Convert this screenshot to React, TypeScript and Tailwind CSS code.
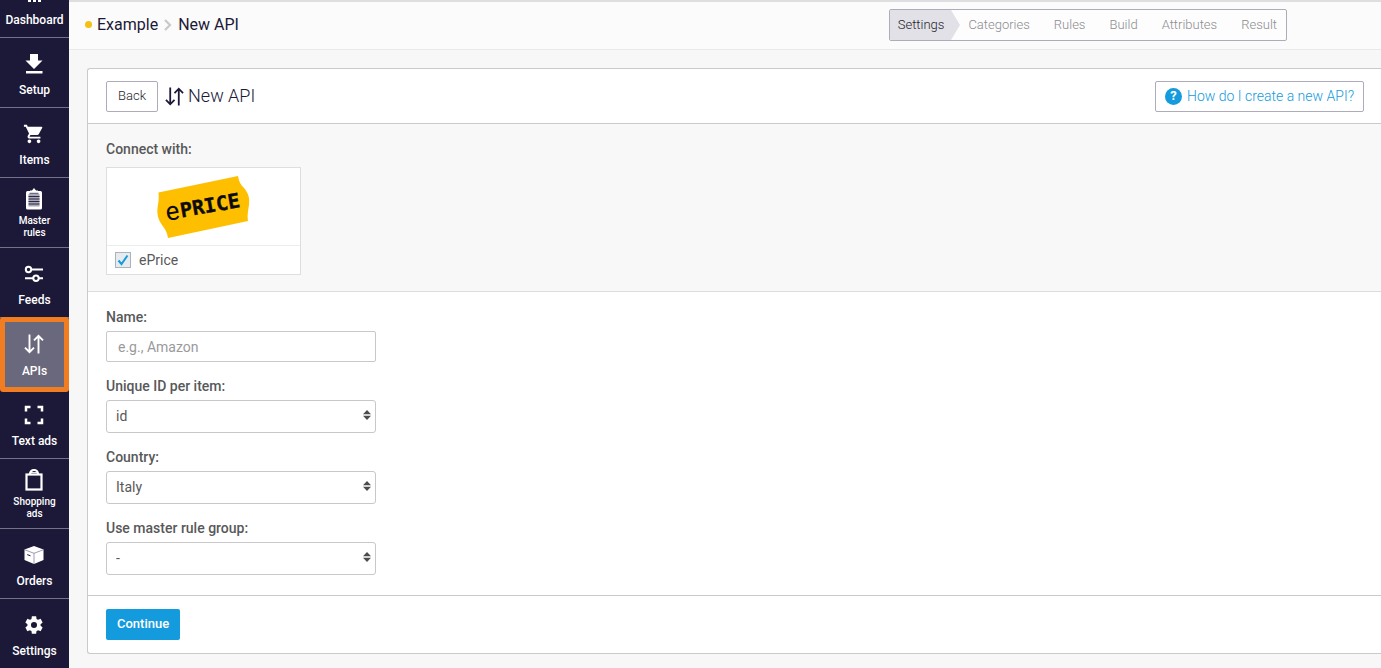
import { useState } from "react";
import type { ReactNode } from "react";

interface NavItem {
  label: string;
  icon: ReactNode;
  small?: boolean;
  active?: boolean;
}

function ArrowsIcon({ className }: { className: string }) {
  return (
    <svg viewBox="0 0 20 20" className={className} fill="none" stroke="currentColor" strokeWidth="1.9">
      <path d="M5.500 0.500v17.500M1 13.600l4.500 4.600 4.500-4.600M14.500 19.500V2M10 6.400l4.500-4.600 4.500 4.600" />
    </svg>
  );
}

const NAV_ITEMS: NavItem[] = [
  {
    label: "Setup",
    icon: (
      <svg viewBox="0 0 20 22" className="h-[22px] w-5" fill="currentColor">
        <path d="M6 1h8v6.500h4.500L10 16 1.500 7.500H6zM2 18h16.500v2.500H2z" />
      </svg>
    ),
  },
  {
    label: "Items",
    icon: (
      <svg viewBox="0 0 24 24" className="size-[22px]" fill="currentColor">
        <path d="M7 18c-1.1 0-1.99.9-1.99 2S5.900 22 7 22s2-.9 2-2-.9-2-2-2zM1 2v2h2l3.600 7.590-1.350 2.450c-.16.28-.25.61-.25.96 0 1.100.9 2 2 2h12v-2H7.420c-.14 0-.25-.11-.25-.25l.03-.12.9-1.630h7.450c.75 0 1.410-.41 1.750-1.030l3.580-6.490A1 1 0 0 0 20 4H5.210l-.94-2H1zm16 16c-1.100 0-1.990.9-1.990 2s.89 2 1.990 2 2-.9 2-2-.9-2-2-2z" />
      </svg>
    ),
  },
  {
    label: "Master rules",
    small: true,
    icon: (
      <svg viewBox="0 0 18 22" className="h-[22px] w-[18px]">
        <rect x="1" y="3" width="16" height="18.500" rx="1.500" fill="#fff" />
        <path d="M5 5V2.500h2L9 0l2 2.500h2V5z" fill="#fff" />
        <rect x="3.500" y="6" width="11" height="12.500" fill="#a9a8b6" />
        <path d="M3.500 8.500h11M3.500 11h11M3.500 13.500h11M3.500 16h11" stroke="#1c1938" strokeWidth="0.9" />
        <path d="M4.500 5.300h9" stroke="#1c1938" strokeWidth="0.8" />
      </svg>
    ),
  },
  {
    label: "Feeds",
    icon: (
      <svg viewBox="0 0 20 18" className="h-[18px] w-5" fill="none" stroke="currentColor" strokeWidth="2">
        <circle cx="4.500" cy="4.500" r="2.700" />
        <path d="M7.500 4.500H19M1 13.300h8M15 13.300h4" />
        <circle cx="12" cy="13.300" r="2.700" />
      </svg>
    ),
  },
  { label: "APIs", active: true, icon: <ArrowsIcon className="size-5" /> },
  {
    label: "Text ads",
    icon: (
      <svg viewBox="0 0 20 20" className="size-5" fill="none" stroke="currentColor" strokeWidth="2.500">
        <path d="M2 6.500V2h4.500M13.500 2H18v4.500M18 13.500V18h-4.500M6.500 18H2v-4.500" />
      </svg>
    ),
  },
  {
    label: "Shopping ads",
    small: true,
    icon: (
      <svg viewBox="0 0 18 22" className="h-[22px] w-[18px]" fill="none" stroke="currentColor">
        <rect x="1.500" y="5.500" width="15" height="15" strokeWidth="2.200" />
        <path d="M5 5.500C5 -0.500 13 -0.500 13 5.500" strokeWidth="2.200" />
        <path d="M5.500 3.600h7" strokeWidth="1" />
      </svg>
    ),
  },
  {
    label: "Orders",
    icon: (
      <svg viewBox="0 0 20 20" className="size-5">
        <path d="M10 1l9.500 3.500v10.500L10 19 .5 15V4.500z" fill="#fff" />
        <path d="M.5 4.700L10 8.300l9.500-3.600M10 8.300V19" fill="none" stroke="#8583a0" strokeWidth="0.8" />
        <path d="M3.200 9.600l3.300 1.200" stroke="#1c1938" strokeWidth="1" />
      </svg>
    ),
  },
  {
    label: "Settings",
    icon: (
      <svg viewBox="0 0 24 24" className="size-[22px]" fill="currentColor">
        <path d="M19.140 12.940c.04-.3.06-.61.06-.94 0-.32-.02-.64-.07-.94l2.030-1.580c.18-.14.23-.41.12-.61l-1.920-3.320c-.12-.22-.37-.29-.59-.22l-2.390.96c-.5-.38-1.030-.7-1.620-.94L14.400 2.810c-.04-.24-.24-.41-.48-.41h-3.840c-.24 0-.43.17-.47.41L9.250 5.350c-.59.24-1.130.57-1.620.94L5.240 5.330c-.22-.08-.47 0-.59.22L2.740 8.870c-.12.21-.08.47.12.61l2.030 1.580c-.05.3-.09.63-.09.94s.02.64.07.94l-2.030 1.580c-.18.14-.23.41-.12.61l1.920 3.320c.12.22.37.29.59.22l2.390-.96c.5.38 1.030.7 1.620.94l.36 2.540c.05.24.24.41.48.41h3.840c.24 0 .44-.17.47-.41l.36-2.540c.59-.24 1.130-.56 1.620-.94l2.390.96c.22.08.47 0 .59-.22l1.920-3.320c.12-.22.07-.47-.12-.61l-2.010-1.580zM12 15.300A3.300 3.300 0 1 1 12 8.700a3.300 3.300 0 0 1 0 6.600z" />
      </svg>
    ),
  },
];

const STEPS = ["Categories", "Rules", "Build", "Attributes", "Result"];

function Sidebar() {
  return (
    <nav className="h-screen w-[69px] shrink-0 overflow-hidden bg-[#1c1938] text-center text-xs font-medium text-white">
      <a href="#dashboard" className="flex h-[38px] flex-col items-center justify-end gap-2 overflow-hidden border-b border-[#74728a] pb-[9px]">
        <svg viewBox="0 0 16 16" className="size-4 shrink-0" fill="currentColor">
          <path d="M1 8h3v6H1zM6 3h3v11H6zM11 6h3v8h-3z" />
        </svg>
        <span className="leading-4">Dashboard</span>
      </a>
      {NAV_ITEMS.map((item) =>
        item.active ? (
          <a
            key={item.label}
            href="#apis"
            aria-current="page"
            className="relative z-10 -mt-px -mb-[3px] flex h-[75px] flex-col items-center rounded-[3px] border-[5px] border-[#f07d22] bg-[#6a687c] pt-[11px]"
          >
            <span className="flex h-[22px] items-center pr-px">{item.icon}</span>
            <span className="mt-2 leading-4">{item.label}</span>
          </a>
        ) : (
          <a
            key={item.label}
            href={`#${item.label.toLowerCase().replace(" ", "-")}`}
            className={
              item.small
                ? "flex h-[70px] flex-col items-center border-b border-[#74728a] pt-[10px]"
                : "flex h-[70px] flex-col items-center border-b border-[#74728a] pt-[15px]"
            }
          >
            <span className="flex h-[22px] items-center pr-px">{item.icon}</span>
            <span className={item.small ? "mt-[5px] w-12 text-[10px] leading-3" : "mt-[7px] leading-4"}>
              {item.label}
            </span>
          </a>
        )
      )}
    </nav>
  );
}

function TopBar() {
  return (
    <header className="flex h-[50px] items-start justify-between border-t-2 border-b border-t-[#dedee0] border-b-[#e9e9e9] bg-[#fbfbfb] pr-[94px] pl-4">
      <div className="flex h-[45px] items-center text-base text-[#1c1938]">
        <span className="mr-[5px] size-[7px] rounded-full bg-[#f5c012]" />
        <a href="#example">Example</a>
        <svg viewBox="0 0 8 12" className="mx-[6px] h-3 w-2" fill="none" stroke="#c9c9cc" strokeWidth="2.200">
          <path d="M1 1l5 5-5 5" />
        </svg>
        <span>New API</span>
      </div>
      <ol className="mt-[7px] flex h-8 items-center gap-6 rounded-[2px] border border-[#aeacba] bg-[#fdfdfd] pr-[9px] text-[13px] font-light text-[#8c8c90]">
        <li className="flex h-full items-center">
          <span className="flex h-full items-center bg-[#e2e1e7] pr-[7px] pl-2 text-[#1c1c28]">Settings</span>
          <svg viewBox="0 0 9 30" className="-mr-4 h-full w-[9px]" fill="#e2e1e7">
            <path d="M0 0l9 15-9 15z" />
          </svg>
        </li>
        {STEPS.map((step) => (
          <li key={step}>{step}</li>
        ))}
      </ol>
    </header>
  );
}

function SelectField({ id, label, value }: { id: string; label: string; value: string }) {
  return (
    <div className="w-[270px]">
      <label htmlFor={id} className="mb-1 block leading-5 font-medium">
        {label}
      </label>
      <div className="relative">
        <select
          id={id}
          defaultValue={value}
          className="block h-[33px] w-full appearance-none rounded-[3px] border border-[#c8c8ca] bg-white px-[9px] pb-0.5 text-sm text-[#58585a]"
        >
          <option>{value}</option>
        </select>
        <svg viewBox="0 0 8 10" className="pointer-events-none absolute top-[10px] right-[5px] h-[10px] w-2" fill="#4c4c4e">
          <path d="M0 4.300L4 0l4 4.300zM0 5.700h8L4 10z" />
        </svg>
      </div>
    </div>
  );
}

function EpriceLogo() {
  return (
    <svg viewBox="0 0 94 64" className="h-16 w-[94px]" role="img" aria-label="ePrice">
      <path
        d="M2.500 17.500L82 1c1 6 3 9 6 12 4 5 6 9 5 17-1 6-2 11-1 16L12 63c-1-6-3-9-6-13-4-6-5-10-4.500-17 1-6 1.500-9 1-15.500z"
        fill="#fdbf00"
      />
      <g transform="rotate(-10 11 46)" fill="#0c0b08">
        <text x="11" y="46" fontSize="26" fontFamily="Liberation Sans Narrow, Roboto, sans-serif">e</text>
        <text x="26" y="45" fontSize="20" fontWeight="700" fontFamily="DejaVu Sans Mono, monospace" stroke="#0c0b08" strokeWidth="0.4">
          PRICE
        </text>
      </g>
    </svg>
  );
}

export default function App() {
  const [connected, setConnected] = useState(true);
  const [name, setName] = useState("");

  return (
    <div className="flex h-screen overflow-hidden bg-[#f7f7f7] font-['Roboto',sans-serif] text-sm text-[#58585a]">
      <Sidebar />
      <div className="min-w-0 flex-1">
        <TopBar />
        <main className="mt-[18px] ml-[18px] rounded-l-[3px] border border-r-0 border-[#cacacc] bg-white">
          <div className="flex h-[55px] items-center border-b border-[#cacacc] pr-[17px] pl-[18px]">
            <button type="button" className="h-[31px] rounded-[2px] border border-[#aeacba] px-[11px] text-[13px] font-light text-[#26262e]">
              Back
            </button>
            <ArrowsIcon className="ml-[7px] size-[19px] text-[#1c1938]" />
            <h1 className="ml-1 text-lg font-light text-[#1c1938]">New API</h1>
            <a
              href="#help"
              className="ml-auto flex h-[31px] items-center gap-[5px] rounded-[2px] border border-[#aeacba] px-[9px] font-light text-[#149bdd]"
            >
              <span className="flex size-[17px] items-center justify-center rounded-full bg-[#149bdd] text-[13px] font-bold text-white">?</span>
              How do I create a new API?
            </a>
          </div>

          <section className="border-b border-[#dcdcde] bg-[#f8f8f8] px-[18px] pt-[15px] pb-4">
            <h2 className="leading-5 font-medium">Connect with:</h2>
            <div className="mt-2 w-[195px] border border-[#dedee0] bg-white">
              <div className="flex h-[77px] items-center justify-center pr-[2px]">
                <EpriceLogo />
              </div>
              <label className="flex h-[29px] items-center border-t border-[#ededed] pl-2">
                <span className="relative flex size-4">
                  <input
                    type="checkbox"
                    checked={connected}
                    onChange={(e) => setConnected(e.target.checked)}
                    className="size-4 appearance-none border border-[#a9b3bb] bg-[#e8ebee]"
                  />
                  {connected && (
                    <svg viewBox="0 0 16 16" className="pointer-events-none absolute inset-0 size-4" fill="none" stroke="#149bdd" strokeWidth="2">
                      <path d="M3.500 8.500l3 3.500L12.500 3.500" />
                    </svg>
                  )}
                </span>
                <span className="ml-2">ePrice</span>
              </label>
            </div>
          </section>

          <form onSubmit={(e) => e.preventDefault()}>
            <div className="flex flex-col gap-[14px] px-[18px] pt-[15px] pb-5">
              <div className="w-[270px]">
                <label htmlFor="name" className="mb-1 block leading-5 font-medium">
                  Name:
                </label>
                <input
                  id="name"
                  type="text"
                  value={name}
                  onChange={(e) => setName(e.target.value)}
                  placeholder="e.g., Amazon"
                  className="block h-[31px] w-full rounded-[2px] border border-[#c8c8ca] bg-white px-[11px] placeholder:text-[#9a9a9c]"
                />
              </div>
              <SelectField id="unique-id" label="Unique ID per item:" value="id" />
              <SelectField id="country" label="Country:" value="Italy" />
              <SelectField id="rule-group" label="Use master rule group:" value="-" />
            </div>
            <div className="border-t border-[#cacacc] px-[18px] py-[13px]">
              <button type="submit" className="block h-[31px] rounded-[2px] bg-[#149bdd] px-[11px] text-[13px] font-medium text-white">
                Continue
              </button>
            </div>
          </form>
        </main>
      </div>
    </div>
  );
}
